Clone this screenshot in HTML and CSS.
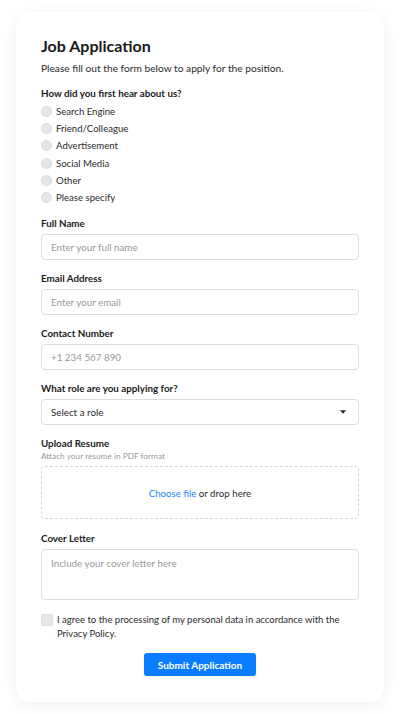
FILE: index.html
```html
<!DOCTYPE html>
<html lang="en">
<head>
<meta charset="utf-8">
<title>Job Application</title>
<link rel="stylesheet" href="styles.css">
</head>
<body>
<form class="card">
  <h1 class="title">Job Application</h1>
  <p class="subtitle">Please fill out the form below to apply for the position.</p>

  <div class="group group-radio">
    <div class="label">How did you first hear about us?</div>
    <label class="radio"><span class="dot"></span>Search Engine</label>
    <label class="radio"><span class="dot"></span>Friend/Colleague</label>
    <label class="radio"><span class="dot"></span>Advertisement</label>
    <label class="radio"><span class="dot"></span>Social Media</label>
    <label class="radio"><span class="dot"></span>Other</label>
    <label class="radio"><span class="dot"></span>Please specify</label>
  </div>

  <div class="group">
    <div class="label">Full Name</div>
    <div class="input placeholder">Enter your full name</div>
  </div>

  <div class="group">
    <div class="label">Email Address</div>
    <div class="input placeholder">Enter your email</div>
  </div>

  <div class="group">
    <div class="label">Contact Number</div>
    <div class="input placeholder">+1 234 567 890</div>
  </div>

  <div class="group">
    <div class="label">What role are you applying for?</div>
    <div class="input select">
      <span>Select a role</span>
      <svg class="caret" width="6" height="4" viewBox="0 0 6 4"><path d="M0 0.3 H6 L3 3.7 Z" fill="#222"/></svg>
    </div>
  </div>

  <div class="group group-upload">
    <div class="label">Upload Resume</div>
    <div class="hint">Attach your resume in PDF format</div>
    <div class="drop"><span class="link">Choose file</span>&nbsp;or drop here</div>
  </div>

  <div class="group">
    <div class="label">Cover Letter</div>
    <div class="input textarea placeholder">Include your cover letter here</div>
  </div>

  <label class="agree"><span class="box"></span><span>I agree to the processing of my personal data in accordance with the Privacy Policy.</span></label>

  <div class="actions"><button type="button" class="submit">Submit Application</button></div>
</form>
</body>
</html>
```

FILE: styles.css
```css
* { box-sizing: border-box; }
html, body { margin: 0; background: #fff; }
body {
  padding: 12px 16px;
  font-family: Lato, "Noto Sans", sans-serif;
  color: #2a2a2a;
}
.card {
  width: 368px;
  height: 690px;
  background: #fff;
  border-radius: 14px;
  box-shadow: 0 3px 16px rgba(0,0,0,0.07);
  padding: 24px 25px 26px;
  display: flex;
  flex-direction: column;
}
.title {
  margin: 0;
  font-size: 16px;
  line-height: 20px;
  font-weight: 700;
  color: #1a1a1a;
}
.subtitle {
  margin: 5px 0 11px;
  font-size: 10.2px;
  line-height: 14px;
  color: #2a2a2a;
}
.group { display: flex; flex-direction: column; margin-bottom: 11px; }
.group-radio { margin-bottom: 10px; }
.group-upload { margin-bottom: 12px; }
.label {
  font-size: 9.8px;
  line-height: 14px;
  font-weight: 700;
  color: #1a1a1a;
  margin-bottom: 4px;
}
.group-radio .label { margin-bottom: 3px; }
.radio {
  display: flex;
  align-items: center;
  height: 17.2px;
  font-size: 9.6px;
  color: #2a2a2a;
}
.dot {
  width: 11px; height: 11px;
  border-radius: 50%;
  background: #e6e6e6;
  border: 1px solid #dcdcdc;
  margin-right: 4px;
  flex: none;
}
.input {
  height: 26px;
  border: 1px solid #dcdcdc;
  border-radius: 4px;
  padding: 0 9px;
  display: flex;
  align-items: center;
  font-size: 9.8px;
  color: #2a2a2a;
}
.placeholder { color: #9a9a9a; }
.select { justify-content: space-between; padding-right: 12px; }
.select span { color: #2a2a2a; }
.hint {
  font-size: 8.3px;
  line-height: 10px;
  color: #999;
  margin: -3px 0 5px;
}
.drop {
  height: 53px;
  border: 1px dashed #d6d6d6;
  border-radius: 4px;
  display: flex;
  align-items: center;
  justify-content: center;
  font-size: 9.7px;
  color: #2a2a2a;
}
.link { color: #1a85ff; }
.textarea {
  height: 51px;
  align-items: flex-start;
  padding-top: 7px;
}
.agree {
  display: flex;
  align-items: flex-start;
  margin-top: 2px;
  font-size: 9.5px;
  line-height: 14px;
  color: #2a2a2a;
}
.box {
  width: 12px; height: 12px;
  border-radius: 2px;
  background: #e6e6e6;
  border: 1px solid #dcdcdc;
  margin: 1px 4px 0 0;
  flex: none;
}
.actions { display: flex; justify-content: center; margin-top: 12px; }
.submit {
  width: 112px;
  height: 23px;
  border: none;
  border-radius: 3px;
  background: #0a7cff;
  color: #fff;
  font-family: Lato, "Noto Sans", sans-serif;
  font-size: 10px;
  font-weight: 700;
  padding: 0;
}
```
